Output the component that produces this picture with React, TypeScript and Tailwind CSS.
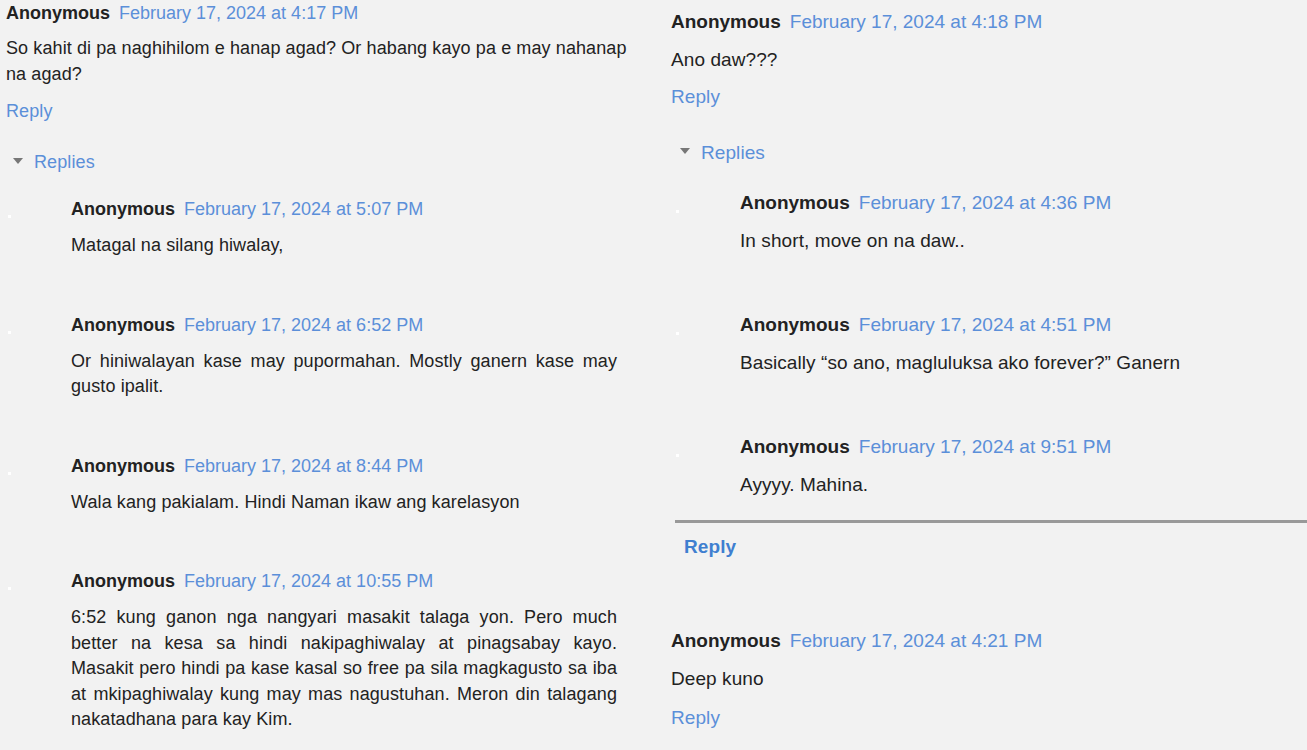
const LEFT_REPLIES = [
  { date: "February 17, 2024 at 5:07 PM", text: "Matagal na silang hiwalay," },
  {
    date: "February 17, 2024 at 6:52 PM",
    text: "Or hiniwalayan kase may pupormahan. Mostly ganern kase may gusto ipalit.",
  },
  { date: "February 17, 2024 at 8:44 PM", text: "Wala kang pakialam. Hindi Naman ikaw ang karelasyon" },
  {
    date: "February 17, 2024 at 10:55 PM",
    text: "6:52 kung ganon nga nangyari masakit talaga yon. Pero much better na kesa sa hindi nakipaghiwalay at pinagsabay kayo. Masakit pero hindi pa kase kasal so free pa sila magkagusto sa iba at mkipaghiwalay kung may mas nagustuhan. Meron din talagang nakatadhana para kay Kim.",
  },
];

const RIGHT_REPLIES = [
  { date: "February 17, 2024 at 4:36 PM", text: "In short, move on na daw.." },
  { date: "February 17, 2024 at 4:51 PM", text: "Basically \u201cso ano, magluluksa ako forever?\u201d Ganern" },
  { date: "February 17, 2024 at 9:51 PM", text: "Ayyyy. Mahina." },
];

function Header({ date }: { date: string }) {
  return (
    <div className="flex items-baseline whitespace-nowrap tracking-normal">
      <span className="font-bold text-[#222]">Anonymous</span>
      <span className="ml-[9px] text-[#5b8fd9]">{date}</span>
    </div>
  );
}

function Triangle() {
  return (
    <svg width="10" height="6" viewBox="0 0 10 6" className="-mt-[3px] shrink-0">
      <path d="M0 0h10L5 6z" fill="#777" />
    </svg>
  );
}

export default function App() {
  return (
    <div
      className="flex h-[750px] w-[1307px] overflow-hidden bg-[#f2f2f2] text-[#222]"
      style={{ fontFamily: '"Liberation Sans", Arial, sans-serif' }}
    >
      {/* left thread */}
      <div className="w-[671px] shrink-0 pl-[6px] pr-[35px] text-[18px] leading-[26px] tracking-[0.1px]">
        <Header date="February 17, 2024 at 4:17 PM" />
        <p className="mt-[9px]">So kahit di pa naghihilom e hanap agad? Or habang kayo pa e may nahanap na agad?</p>
        <div className="mt-[11px] text-[#5b8fd9]">Reply</div>
        <div className="mt-[25px] flex items-center gap-[11px] pl-[7px] text-[#5b8fd9]">
          <Triangle />
          <span>Replies</span>
        </div>
        <div className="mt-[21px] flex flex-col gap-[53px] pr-[19px]">
          {LEFT_REPLIES.map((r) => (
            <div key={r.date} className="relative pl-[65px]">
              <span className="absolute left-[2px] top-[19px] h-[3px] w-[3px] bg-white" />
              <Header date={r.date} />
              <p className="mt-[11px] text-justify leading-[25.5px]">{r.text}</p>
            </div>
          ))}
        </div>
      </div>

      {/* right thread */}
      <div className="flex-1 pt-[8px] text-[19px] leading-[27px] tracking-[0.08px]">
        <Header date="February 17, 2024 at 4:18 PM" />
        <p className="mt-[11px]">Ano daw???</p>
        <div className="mt-[10px] text-[#5b8fd9]">Reply</div>
        <div className="mt-[29px] flex items-center gap-[11px] pl-[9px] text-[#5b8fd9]">
          <Triangle />
          <span>Replies</span>
        </div>
        <div className="ml-[4px] mt-[23px] flex flex-col gap-[57px]">
          {RIGHT_REPLIES.map((r) => (
            <div key={r.date} className="relative pl-[65px]">
              <span className="absolute left-[1px] top-[21px] h-[3px] w-[3px] bg-white" />
              <Header date={r.date} />
              <p className="mt-[11px]">{r.text}</p>
            </div>
          ))}
        </div>
        <div className="ml-[4px] mt-[22px] h-[3px] bg-[#999]" />
        <div className="ml-[13px] mt-[10px] font-bold text-[#3f7fd0]">Reply</div>
        <div className="mt-[67px]">
          <Header date="February 17, 2024 at 4:21 PM" />
          <p className="mt-[11px]">Deep kuno</p>
          <div className="mt-[12px] text-[#5b8fd9]">Reply</div>
        </div>
      </div>
    </div>
  );
}
